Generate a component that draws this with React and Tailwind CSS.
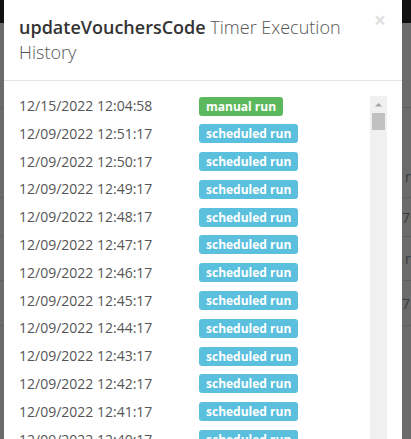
import React from "react";

const rows = [
  ["12/15/2022 12:04:58", "manual"],
  ["12/09/2022 12:51:17", "scheduled"],
  ["12/09/2022 12:50:17", "scheduled"],
  ["12/09/2022 12:49:17", "scheduled"],
  ["12/09/2022 12:48:17", "scheduled"],
  ["12/09/2022 12:47:17", "scheduled"],
  ["12/09/2022 12:46:17", "scheduled"],
  ["12/09/2022 12:45:17", "scheduled"],
  ["12/09/2022 12:44:17", "scheduled"],
  ["12/09/2022 12:43:17", "scheduled"],
  ["12/09/2022 12:42:17", "scheduled"],
  ["12/09/2022 12:41:17", "scheduled"],
  ["12/09/2022 12:40:17", "scheduled"],
  ["12/09/2022 12:39:17", "scheduled"],
];

export default function App() {
  return (
    <div className="relative w-[411px] h-[439px] overflow-hidden bg-[#6b6b6b] font-['Open_Sans',sans-serif]">
      {/* background page (dimmed) */}
      <div className="h-[23px] bg-[#111111]" />
      <div className="flex flex-col text-[#3a3a3a] text-[14px] whitespace-nowrap">
        <div className="h-[85px] border-b border-[#5f5f5f]" />
        <div className="h-[90px] border-b border-[#5f5f5f] flex items-end pb-[10px]"><span className="pl-[405px]">r</span></div>
        <div className="h-[39px] border-b border-[#5f5f5f] flex items-center"><span className="pl-[402px]">7:</span></div>
        <div className="h-[44px] border-b border-[#5f5f5f] flex items-center"><span className="pl-[405px]">r</span></div>
        <div className="h-[45px] border-b border-[#5f5f5f] flex items-center"><span className="pl-[402px]">7:</span></div>
      </div>

      {/* modal */}
      <div className="absolute left-[4px] top-0 w-[398px] h-[460px] bg-white">
        <div className="relative px-[15px] pt-[15px] pb-[15px] border-b border-[#e5e5e5] h-[81px]">
          <span className="absolute right-[16px] top-[10px] text-[21px] font-bold leading-none text-black opacity-[0.12]">×</span>
          <h4 className="text-[18px] leading-[25px] text-[#555] font-light pr-[20px]">
            <b className="font-semibold text-[#333]">updateVouchersCode</b> Timer Execution History
          </h4>
        </div>
        <div className="flex pl-[15px] pr-[15px] pt-[15px]">
          <div className="flex-1 flex flex-col">
            {rows.map(([d, t], i) => (
              <div key={i} className="flex items-center h-[20px] mb-[7.8px]">
                <div className="w-[180px] text-[14px] text-[#555] leading-[20px]">{d}</div>
                {t === "manual" ? (
                  <span className="bg-[#5cb85c] text-white text-[12px] font-bold leading-[13px] px-[7px] pt-[3px] pb-[3px] rounded-[3px]">manual run</span>
                ) : (
                  <span className="bg-[#5bc0de] text-white text-[12px] font-bold leading-[13px] px-[7px] pt-[3px] pb-[3px] rounded-[3px]">scheduled run</span>
                )}
              </div>
            ))}
          </div>
          <div className="w-[17px] bg-[#f0f0f0] flex flex-col items-center self-stretch">
            <svg width="17" height="17" viewBox="0 0 17 17">
              <path d="M5 10.5 L8.5 7 L12 10.5 Z" fill="#a3a3a3" />
            </svg>
            <div className="w-[13px] h-[17px] bg-[#c1c1c1]" />
          </div>
        </div>
      </div>
    </div>
  );
}
